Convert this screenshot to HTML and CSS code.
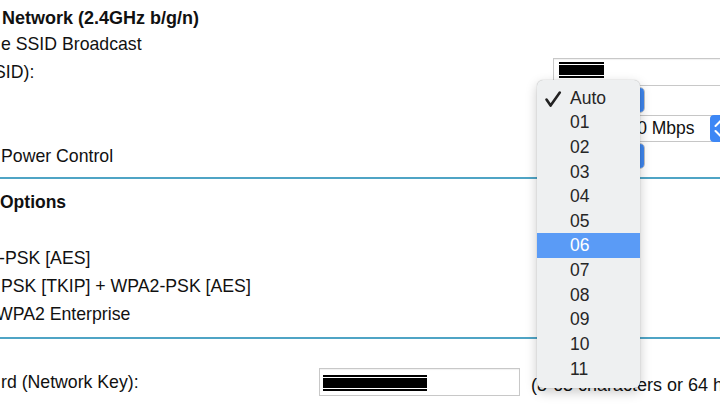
FILE: index.html
```html
<!DOCTYPE html>
<html lang="en">
<head>
<meta charset="utf-8">
<title>Wireless Settings</title>
<link rel="stylesheet" href="styles.css">
</head>
<body>
<div class="page">
  <section class="sec sec-top">
    <div class="row row-head"><span class="lbl head">Network (2.4GHz b/g/n)</span></div>
    <div class="row"><span class="lbl">e SSID Broadcast</span></div>
    <div class="row">
      <span class="lbl cut-s">SID):</span>
      <div class="field"><div class="input input-ssid"><span class="redact redact-ssid"></span></div></div>
    </div>
    <div class="row">
      <span class="lbl"></span>
      <div class="field"><div class="popup"><span class="popup-text">Auto</span><span class="popup-btn"></span></div></div>
    </div>
    <div class="row">
      <span class="lbl"></span>
      <div class="field">
        <div class="select-mode">
          <span class="mode-text">Up to 300 Mbps</span>
          <span class="mode-btn">
            <svg class="chev" width="24" height="27" viewBox="0 0 24 27"><path d="M5.5 11 L10.5 6 L15.5 11 M5.5 16 L10.5 21 L15.5 16" fill="none" stroke="#fff" stroke-width="2" stroke-linecap="round" stroke-linejoin="round"/></svg>
          </span>
        </div>
      </div>
    </div>
    <div class="row">
      <span class="lbl">Power Control</span>
      <div class="field"><div class="popup"><span class="popup-text">100%</span><span class="popup-btn"></span></div></div>
    </div>
  </section>
  <div class="rule rule-1"></div>
  <section class="sec sec-security">
    <div class="row"><span class="lbl bold">Options</span></div>
    <div class="row"><span class="lbl"></span></div>
    <div class="row"><span class="lbl cut-h">-PSK [AES]</span></div>
    <div class="row"><span class="lbl">PSK [TKIP] + WPA2-PSK [AES]</span></div>
    <div class="row"><span class="lbl cut-w">WPA2 Enterprise</span></div>
  </section>
  <div class="rule rule-2"></div>
  <section class="sec sec-key">
    <div class="row-key">
      <span class="lbl key-lbl">rd (Network Key):</span>
      <div class="input input-key"><span class="redact redact-key"></span></div>
      <span class="hint">(8-63 characters or 64 hex digits)</span>
    </div>
  </section>

  <div class="menu">
    <div class="item checked">
      <svg class="check" width="20" height="20" viewBox="0 0 20 20"><path d="M3.5 10.5 L7.6 16.6 L16.8 3.6" fill="none" stroke="#222" stroke-width="2.6" stroke-linecap="round" stroke-linejoin="round"/></svg>
      <span>Auto</span>
    </div>
    <div class="item"><span>01</span></div>
    <div class="item"><span>02</span></div>
    <div class="item"><span>03</span></div>
    <div class="item"><span>04</span></div>
    <div class="item"><span>05</span></div>
    <div class="item active"><span>06</span></div>
    <div class="item"><span>07</span></div>
    <div class="item"><span>08</span></div>
    <div class="item"><span>09</span></div>
    <div class="item"><span>10</span></div>
    <div class="item"><span>11</span></div>
  </div>
</div>
</body>
</html>
```

FILE: styles.css
```css
html, body {
  margin: 0;
  padding: 0;
  background: #ffffff;
}
body {
  width: 720px;
  height: 405px;
  overflow: hidden;
  font-family: "Liberation Sans", Arial, Helvetica, sans-serif;
  color: #111;
}
.page {
  position: relative;
  width: 720px;
  height: 405px;
  overflow: hidden;
  padding-top: 6px;
  box-sizing: border-box;
}
.sec {
  display: flex;
  flex-direction: column;
}
.row {
  display: grid;
  grid-template-columns: 553px 1fr;
  align-items: center;
  height: 28px;
}
.row-head {
  height: 24px;
}
.lbl {
  font-size: 17.7px;
  line-height: 28px;
  white-space: nowrap;
  padding-left: 1px;
}
.head {
  font-size: 18px;
  font-weight: bold;
  line-height: 24px;
  padding-left: 2px;
}
.bold {
  font-weight: bold;
  font-size: 17.5px;
  padding-left: 0;
}
.cut-s { margin-left: -7px; }
.cut-h { margin-left: -1px; padding-left: 0; }
.cut-w { margin-left: -4px; padding-left: 0; }

.field {
  display: flex;
  align-items: center;
  height: 28px;
}
.input {
  box-sizing: border-box;
  height: 28px;
  border: 1px solid #c8c8c8;
  background: #fff;
  box-shadow: inset 0 1px 1px rgba(0,0,0,0.06);
  display: flex;
  align-items: flex-start;
}
.input-ssid {
  width: 220px;
  flex: none;
}
.redact {
  display: block;
  height: 16px;
  background: linear-gradient(#000 0 2px, #fff 2px 3px, #000 3px 13px, #fff 13px 14px, #000 14px 16px);
}
.redact-ssid {
  width: 45px;
  margin: 3px 0 0 5px;
}

.popup {
  box-sizing: border-box;
  width: 92px;
  height: 26px;
  border-radius: 5px;
  border: 1px solid #c4c4c4;
  background: #fff;
  display: flex;
  align-items: center;
  overflow: hidden;
  font-size: 15px;
}
.popup-text {
  flex: 1;
  padding-left: 8px;
}
.popup-btn {
  width: 20px;
  align-self: stretch;
  background: #3f86ee;
}

.select-mode {
  box-sizing: border-box;
  width: 185px;
  height: 27px;
  flex: none;
  border-top: 1px solid #c6c6c6;
  border-bottom: 1px solid #c6c6c6;
  border-left: 1px solid #c6c6c6;
  display: flex;
  align-items: center;
  background: #fff;
}
.mode-text {
  flex: 1;
  font-size: 17.5px;
  padding-left: 17px;
  white-space: nowrap;
}
.mode-btn {
  width: 28px;
  align-self: stretch;
  margin: -1px 0;
  background: #3d87f5;
  border-radius: 4px 0 0 4px;
  display: flex;
  align-items: center;
}
.chev { display: block; }

.rule {
  height: 2px;
  background: #4fa4c5;
}
.rule-1 { margin-top: 7px; }
.rule-2 { margin-top: 9px; }
.sec-security { margin-top: 9px; }
.sec-key { margin-top: 29px; }

.row-key {
  display: flex;
  align-items: flex-start;
  height: 28px;
}
.key-lbl {
  width: 318px;
  flex: none;
}
.input-key {
  width: 201px;
  flex: none;
}
.redact-key {
  width: 104px;
  margin: 6px 0 0 3px;
}
.hint {
  font-size: 18px;
  line-height: 28px;
  margin-left: 11px;
  padding-top: 3px;
  white-space: nowrap;
}

.menu {
  position: absolute;
  left: 537px;
  top: 80px;
  width: 103px;
  box-sizing: border-box;
  padding: 5.7px 0 6.5px;
  background: #eef0f1;
  border-radius: 6px;
  box-shadow: 0 4px 12px rgba(0,0,0,0.22), 0 0 1px rgba(0,0,0,0.35);
}
.item {
  position: relative;
  height: 24.64px;
  line-height: 24.64px;
  font-size: 17.5px;
  color: #262626;
  padding-left: 33px;
}
.item.active {
  background: #5a9bf6;
  color: #fff;
}
.check {
  position: absolute;
  left: 6px;
  top: 3px;
}
```
